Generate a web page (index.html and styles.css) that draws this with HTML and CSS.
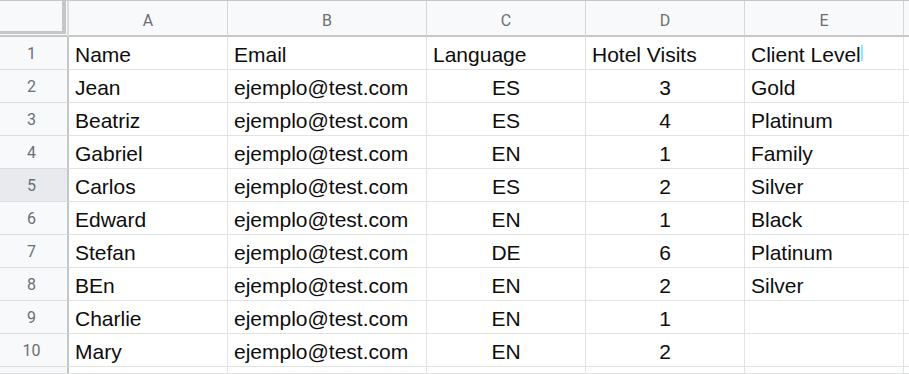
FILE: index.html
```html
<!DOCTYPE html>
<html>
<head>
<meta charset="utf-8">
<link rel="stylesheet" href="styles.css">
</head>
<body>
<div class="sheet">
  <div class="corner"><span class="corner-box"></span></div>
  <div class="colhead">A</div>
  <div class="colhead">B</div>
  <div class="colhead">C</div>
  <div class="colhead">D</div>
  <div class="colhead">E</div>
  <div class="colhead rest"></div>

  <div class="rowhead">1</div>
  <div class="cell">Name</div>
  <div class="cell">Email</div>
  <div class="cell">Language</div>
  <div class="cell">Hotel Visits</div>
  <div class="cell">Client Level<span class="caret"></span></div>
  <div class="cell rest"></div>

  <div class="rowhead">2</div>
  <div class="cell">Jean</div>
  <div class="cell">ejemplo@test.com</div>
  <div class="cell center">ES</div>
  <div class="cell center">3</div>
  <div class="cell">Gold</div>
  <div class="cell rest"></div>

  <div class="rowhead">3</div>
  <div class="cell">Beatriz</div>
  <div class="cell">ejemplo@test.com</div>
  <div class="cell center">ES</div>
  <div class="cell center">4</div>
  <div class="cell">Platinum</div>
  <div class="cell rest"></div>

  <div class="rowhead">4</div>
  <div class="cell">Gabriel</div>
  <div class="cell">ejemplo@test.com</div>
  <div class="cell center">EN</div>
  <div class="cell center">1</div>
  <div class="cell">Family</div>
  <div class="cell rest"></div>

  <div class="rowhead active">5</div>
  <div class="cell">Carlos</div>
  <div class="cell">ejemplo@test.com</div>
  <div class="cell center">ES</div>
  <div class="cell center">2</div>
  <div class="cell">Silver</div>
  <div class="cell rest"></div>

  <div class="rowhead">6</div>
  <div class="cell">Edward</div>
  <div class="cell">ejemplo@test.com</div>
  <div class="cell center">EN</div>
  <div class="cell center">1</div>
  <div class="cell">Black</div>
  <div class="cell rest"></div>

  <div class="rowhead">7</div>
  <div class="cell">Stefan</div>
  <div class="cell">ejemplo@test.com</div>
  <div class="cell center">DE</div>
  <div class="cell center">6</div>
  <div class="cell">Platinum</div>
  <div class="cell rest"></div>

  <div class="rowhead">8</div>
  <div class="cell">BEn</div>
  <div class="cell">ejemplo@test.com</div>
  <div class="cell center">EN</div>
  <div class="cell center">2</div>
  <div class="cell">Silver</div>
  <div class="cell rest"></div>

  <div class="rowhead">9</div>
  <div class="cell">Charlie</div>
  <div class="cell">ejemplo@test.com</div>
  <div class="cell center">EN</div>
  <div class="cell center">1</div>
  <div class="cell"></div>
  <div class="cell rest"></div>

  <div class="rowhead">10</div>
  <div class="cell">Mary</div>
  <div class="cell">ejemplo@test.com</div>
  <div class="cell center">EN</div>
  <div class="cell center">2</div>
  <div class="cell"></div>
  <div class="cell rest"></div>

  <div class="rowhead"></div>
  <div class="cell"></div>
  <div class="cell"></div>
  <div class="cell"></div>
  <div class="cell"></div>
  <div class="cell"></div>
  <div class="cell rest"></div>
</div>
</body>
</html>
```

FILE: styles.css
```css
* { box-sizing: border-box; }

html, body {
  margin: 0;
  padding: 0;
  background: #ffffff;
  overflow: hidden;
}

.sheet {
  display: grid;
  grid-template-columns: 69px 159px 199px 159px 159px 159px 1fr;
  grid-template-rows: 37px repeat(10, 33px) 7px;
  width: 909px;
  height: 374px;
  font-family: "Liberation Sans", Arial, sans-serif;
}

.corner {
  background: #f8f9fa;
  border-top: 1px solid #c4c7c5;
  border-bottom: 2px solid #c4c7c5;
  border-right: 2px solid #dadce0;
  display: flex;
}

.corner-box {
  width: 66px;
  height: 34px;
  margin-top: -1px;
  border-right: 4px solid #c4c7c5;
  border-bottom: 3px solid #c4c7c5;
}

.colhead {
  background: #f8f9fa;
  border-top: 1px solid #c4c7c5;
  border-bottom: 2px solid #c4c7c5;
  border-right: 1px solid #d3d5d8;
  color: #6b6f74;
  font-family: Roboto, "Liberation Sans", Arial, sans-serif;
  font-size: 16px;
  display: flex;
  align-items: center;
  justify-content: center;
  padding-top: 4px;
}

.colhead.rest { border-right: none; }

.rowhead {
  background: #f8f9fa;
  border-right: 2px solid #c4c7c5;
  border-bottom: 1px solid #dadce0;
  color: #6b6f74;
  font-family: Roboto, "Liberation Sans", Arial, sans-serif;
  font-size: 16px;
  display: flex;
  align-items: center;
  justify-content: center;
  padding-right: 4px;
}

.rowhead.active { background: #e8eaed; }

.cell {
  border-right: 1px solid #e2e3e3;
  border-bottom: 1px solid #e2e3e3;
  color: #0d0d0d;
  font-size: 21px;
  display: flex;
  align-items: flex-end;
  padding: 0 5px 2px 6px;
  white-space: nowrap;
  overflow: hidden;
}

.cell.center { justify-content: center; padding-left: 0; padding-right: 0; }

.cell.rest { border-right: none; }

.caret {
  display: inline-block;
  width: 2px;
  height: 16px;
  margin-left: 0;
  margin-bottom: 6px;
  background: #8ae9ff;
}
```
